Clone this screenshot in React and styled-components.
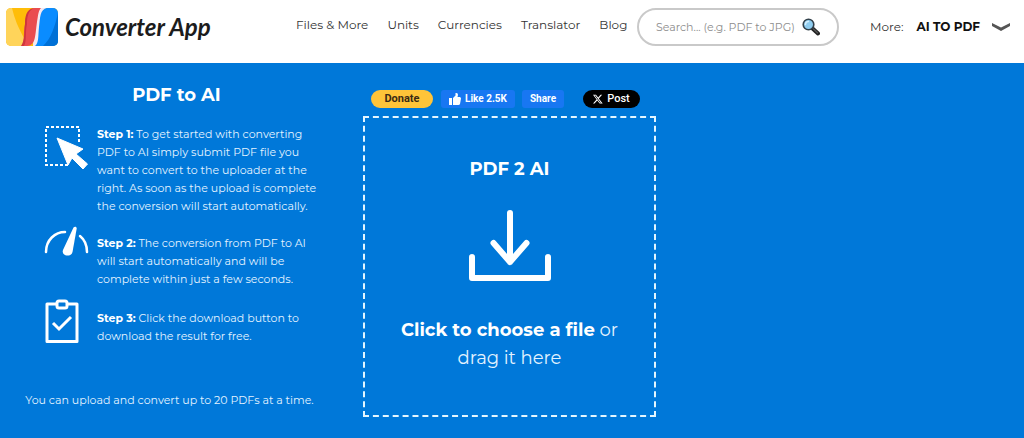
import React, { useState } from "react";
import styled, { createGlobalStyle } from "styled-components";

const GlobalStyle = createGlobalStyle`
  * {
    box-sizing: border-box;
  }
  body {
    margin: 0;
    min-height: 100vh;
    background: #0078d9;
    font-family: Montserrat, Inter, "Liberation Sans", sans-serif;
    color: #fff;
  }
  a {
    color: inherit;
    text-decoration: none;
  }
  button,
  input {
    font-family: inherit;
  }
`;

const Header = styled.header`
  display: grid;
  grid-template-columns:
    minmax(0, 296fr) minmax(0, 341fr) minmax(0, 233fr)
    minmax(0, 154fr);
  align-items: center;
  min-height: 63px;
  padding-bottom: 9px;
  background: #fff;
  color: #333;
`;

const Brand = styled.a`
  display: flex;
  align-items: center;
  gap: 7px;
  padding-left: 6px;
  font-family: Lato, sans-serif;
  font-size: 24px;
  font-weight: 700;
  font-style: italic;
  line-height: 32px;
  white-space: nowrap;
  && {
    color: #1c1c1c;
  }
`;

const Nav = styled.nav`
  display: flex;
  gap: 19px;
  padding-bottom: 4px;
  font-size: 12px;
  line-height: 18px;
  white-space: nowrap;
`;

const SearchForm = styled.form`
  display: flex;
  align-items: center;
  width: 202px;
  max-width: 100%;
  height: 38px;
  padding: 0 17px;
  border: 2px solid #c9c9c9;
  border-radius: 19px;
`;

const SearchInput = styled.input`
  flex: 1;
  min-width: 0;
  padding: 0;
  border: 0;
  outline: 0;
  background: none;
  font-size: 11px;
  color: #333;
  &::placeholder {
    color: #8d8d8d;
    opacity: 1;
  }
`;

const IconButton = styled.button`
  display: flex;
  padding: 0;
  border: 0;
  background: none;
  cursor: pointer;
`;

const More = styled.div`
  display: flex;
  align-items: center;
  font-size: 12px;
  line-height: 18px;
  white-space: nowrap;
  a {
    margin: 0 12px 0 13px;
    font-weight: 700;
    color: #111;
  }
`;

const Main = styled.main`
  display: grid;
  grid-template-columns: minmax(300px, 353px) minmax(280px, 313px);
  padding-bottom: 20px;
`;

const Guide = styled.section`
  padding-top: 20px;
`;

const Title = styled.h1`
  margin: 0 0 18px;
  font-size: 18px;
  line-height: 24px;
  font-weight: 700;
  text-align: center;
`;

const Steps = styled.ol`
  display: flex;
  flex-direction: column;
  gap: 11px;
  margin: 0;
  padding: 0 32px 0 44px;
  list-style: none;
`;

const Step = styled.li`
  display: grid;
  grid-template-columns: 45px 1fr;
  gap: 8px;
`;

const StepText = styled.p`
  margin: 0;
  padding-top: ${(props) => props.$top || 0}px;
  font-size: 11px;
  line-height: 18px;
  color: #e4f3ff;
  b {
    color: #fff;
  }
`;

const Note = styled.p`
  margin: 46px 0 0;
  padding: 0 14px 0 0;
  font-size: 11px;
  line-height: 18px;
  text-align: center;
  color: #e4f3ff;
`;

const Uploader = styled.section`
  padding: 27px 10px 0;
`;

const Social = styled.div`
  display: flex;
  align-items: center;
  padding: 0 8px 8px;
`;

const SocialButton = styled.button`
  display: flex;
  align-items: center;
  justify-content: center;
  gap: 4px;
  height: 18px;
  padding: 0;
  border: 0;
  font-family: Roboto, "Liberation Sans", sans-serif;
  font-size: 11px;
  font-weight: 700;
  line-height: 18px;
  white-space: nowrap;
  cursor: pointer;
`;

const Donate = styled(SocialButton)`
  width: 62px;
  margin-right: 8px;
  border-radius: 9px;
  background: #ffc439;
  color: #3b2a14;
`;

const Facebook = styled(SocialButton)`
  width: ${(props) => (props.$wide ? 74 : 42)}px;
  margin-right: ${(props) => (props.$wide ? 7 : 19)}px;
  border-radius: 3px;
  background: #1877f2;
  color: #fff;
  font-size: 10px;
`;

const Post = styled(SocialButton)`
  width: 57px;
  border-radius: 9px;
  background: #000;
  color: #fff;
  font-weight: 500;
`;

const DropZone = styled.label`
  display: flex;
  flex-direction: column;
  align-items: center;
  padding: 38px 24px 43px;
  border: 2px dashed #e4f6ff;
  text-align: center;
  cursor: pointer;
`;

const FileInput = styled.input`
  position: absolute;
  width: 1px;
  height: 1px;
  opacity: 0;
`;

const DropTitle = styled.span`
  margin-bottom: 28px;
  font-size: 18px;
  line-height: 26px;
  font-weight: 700;
`;

const DropHint = styled.span`
  margin-top: 34px;
  font-size: 18px;
  line-height: 28px;
  color: #e4f3ff;
  b {
    color: #fff;
  }
`;

const links = ["Files & More", "Units", "Currencies", "Translator", "Blog"];

function Logo() {
  return (
    <svg width="52" height="38" viewBox="0 0 52 38" aria-hidden="true">
      <defs>
        <clipPath id="logoFrame">
          <rect width="52" height="38" rx="5" />
        </clipPath>
      </defs>
      <g clipPath="url(#logoFrame)">
        <rect width="52" height="38" fill="#ffbd08" />
        <path d="M0 0h6c3 12 6 19 12 30v8H0z" fill="#ffd45a" />
        <path d="M28 0h12L32 38h-5z" fill="#f6e9f0" />
        <path d="M28 0h7c-3 3-3 9-4 14-1 7-1 10-2 15-1 6-4 9-8 9h-5c3-5 1-13 3-22 1-8 2-15 9-16z" fill="#ea4c50" />
        <path d="M28 0c-8 1-9 9-9 16-1 9 0 16-4 22h3c3-5 1-13 3-22 0-7 1-13 7-16z" fill="#cf363d" />
        <path d="M41 0h11v38H29c4-3 3-10 4-19 1-9 1-18 8-19z" fill="#0a8cff" />
        <path d="M52 5v33H37c8-7 12-20 15-33z" fill="#0070d6" />
      </g>
    </svg>
  );
}

function SearchIcon() {
  return (
    <svg width="18" height="18" viewBox="0 0 18 18" aria-hidden="true">
      <path d="M10 10l6 5.500" stroke="#222" strokeWidth="4" strokeLinecap="round" />
      <path d="M11.500 11l4 3.700" stroke="#555" strokeWidth="1.5" strokeLinecap="round" />
      <circle cx="6.5" cy="6.5" r="5.3" fill="#8fcdf0" stroke="#33414b" strokeWidth="1.6" />
      <path d="M3.500 6.500a3 3 0 0 1 3-3" fill="none" stroke="#d5f0ff" strokeWidth="1.4" strokeLinecap="round" />
    </svg>
  );
}

function CursorIcon() {
  return (
    <svg width="45" height="46" viewBox="0 0 45 46" aria-hidden="true">
      <path d="M35 17V2H2v38h22" fill="none" stroke="#fff" strokeWidth="2" strokeDasharray="3 2" />
      <path
        d="M13 13l26 11-7 5 11.500 10-4.500 5-11-11-4 7z"
        fill="#fff"
        stroke="#fff"
        strokeLinejoin="round"
      />
    </svg>
  );
}

function GaugeIcon() {
  return (
    <svg width="45" height="31" viewBox="0 0 45 31" aria-hidden="true">
      <path
        d="M2 26C2 14 11 6 21 6M36 10c5 4 7 9 7 16"
        fill="none"
        stroke="#fff"
        strokeWidth="2.5"
        strokeLinecap="round"
      />
      <path d="M29.500 1.500c1-1.500 3.500-1 3.200 1L28.500 26c-1.500 6-11.500 4-9.500-2z" fill="#fff" />
    </svg>
  );
}

function ClipboardIcon() {
  return (
    <svg width="45" height="45" viewBox="0 0 45 45" aria-hidden="true">
      <path d="M3 5h30v37.500H3z" fill="none" stroke="#fff" strokeWidth="3" strokeLinejoin="round" />
      <rect x="13" y="2" width="10" height="7" rx="2" fill="#0078d9" stroke="#fff" strokeWidth="3" />
      <path d="M9 24l6 6 12-12" fill="none" stroke="#fff" strokeWidth="3" />
    </svg>
  );
}

function DownloadIcon() {
  return (
    <svg width="82" height="72" viewBox="0 0 82 72" aria-hidden="true">
      <g fill="none" stroke="#fff" strokeWidth="6" strokeLinecap="round" strokeLinejoin="round">
        <path d="M41 3v49M24.500 33L41 52l16.500-19" />
        <path d="M3 47v21h76V47" />
      </g>
    </svg>
  );
}

function App() {
  const [query, setQuery] = useState("");

  return (
    <>
      <GlobalStyle />
      <Header>
        <Brand href="#">
          <Logo />
          Converter App
        </Brand>
        <Nav>
          {links.map((link) => (
            <a href="#" key={link}>
              {link}
            </a>
          ))}
        </Nav>
        <SearchForm onSubmit={(e) => e.preventDefault()}>
          <SearchInput
            aria-label="Search"
            placeholder="Search... (e.g. PDF to JPG)"
            value={query}
            onChange={(e) => setQuery(e.target.value)}
          />
          <IconButton aria-label="Search">
            <SearchIcon />
          </IconButton>
        </SearchForm>
        <More>
          More:
          <a href="#">AI TO PDF</a>
          <IconButton type="button" aria-label="More converters">
            <svg width="18" height="10" viewBox="0 0 18 10" aria-hidden="true">
              <path d="M0 1l9 4.500L18 1v3L9 9 0 4z" fill="#555" />
            </svg>
          </IconButton>
        </More>
      </Header>

      <Main>
        <Guide>
          <Title>PDF to AI</Title>
          <Steps>
            <Step>
              <CursorIcon />
              <StepText>
                <b>Step 1:</b> To get started with converting PDF to AI simply submit PDF file you
                want to convert to the uploader at the right. As soon as the upload is complete the
                conversion will start automatically.
              </StepText>
            </Step>
            <Step>
              <GaugeIcon />
              <StepText $top={8}>
                <b>Step 2:</b> The conversion from PDF to AI will start automatically and will be
                complete within just a few seconds.
              </StepText>
            </Step>
            <Step>
              <ClipboardIcon />
              <StepText $top={10}>
                <b>Step 3:</b> Click the download button to download the result for free.
              </StepText>
            </Step>
          </Steps>
          <Note>You can upload and convert up to 20 PDFs at a time.</Note>
        </Guide>

        <Uploader>
          <Social>
            <Donate type="button">Donate</Donate>
            <Facebook type="button" $wide>
              <svg width="12" height="12" viewBox="0 0 12 12" fill="#fff" aria-hidden="true">
                <path d="M0 5h3v7H0zM4 5l2.500-2.500V0h1q1.500 0 1.500 2L8.500 4H11q1 .5 1 1.500L11 11q-.5 1-1.500 1H4z" />
              </svg>
              Like 2.5K
            </Facebook>
            <Facebook type="button">Share</Facebook>
            <Post type="button">
              <svg width="10" height="10" viewBox="0 0 24 24" fill="#fff" aria-hidden="true">
                <path d="M18.200 1.500h3.700l-8 9.200L23.300 23H16l-5.800-7.500L3.600 23H0l8.600-9.800L-.4 1.500h7.600l5.200 6.900zm-1.300 19.300h2L5.800 3.600H3.600z" />
              </svg>
              Post
            </Post>
          </Social>
          <DropZone>
            <FileInput type="file" accept=".pdf" />
            <DropTitle>PDF 2 AI</DropTitle>
            <DownloadIcon />
            <DropHint>
              <b>Click to choose a file</b> or
              <br />
              drag it here
            </DropHint>
          </DropZone>
        </Uploader>
      </Main>
    </>
  );
}

export default App;
